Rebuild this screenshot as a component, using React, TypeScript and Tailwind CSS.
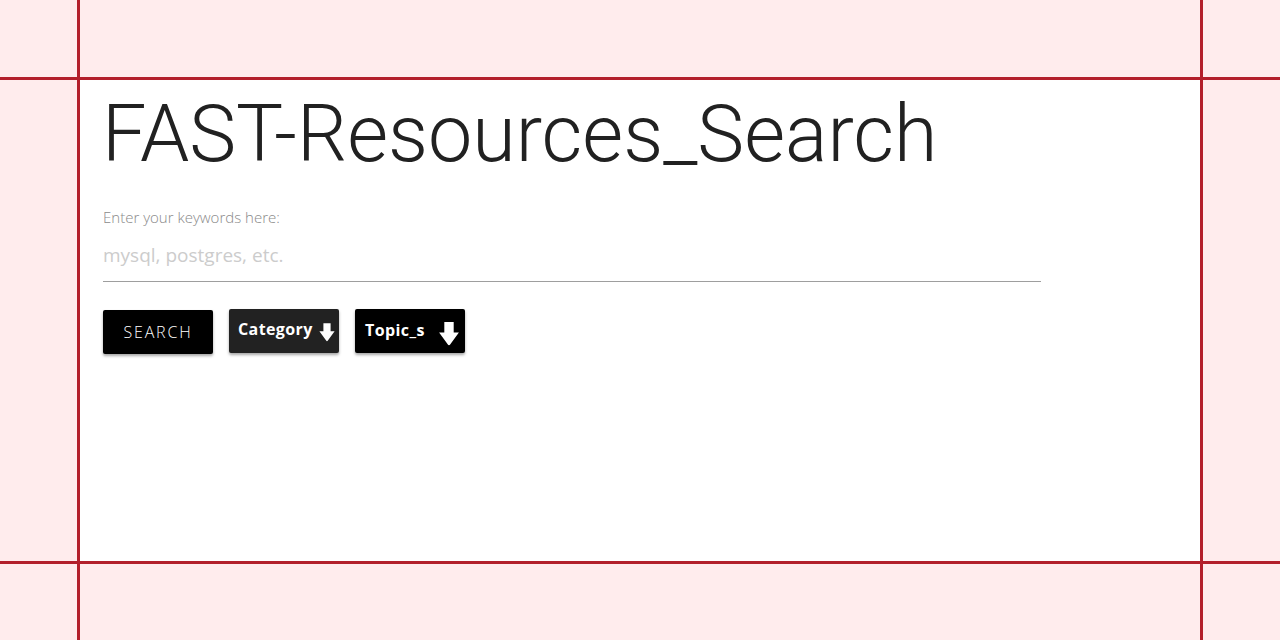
import React from 'react'

function ArrowDown({ className }: { className?: string }) {
  return (
    <svg viewBox="0 0 20 24" className={className} fill="currentColor">
      <path d="M5.5 1h9v10h5l-8.4 11.6a1.3 1.3 0 0 1-2.2 0L0.5 11h5z" />
    </svg>
  )
}

export default function App() {
  return (
    <div className="grid h-[640px] w-[1280px] grid-cols-[77px_3px_1120px_3px_77px] grid-rows-[77px_3px_481px_3px_76px] bg-[#b31f2b]">
      <div className="bg-[#ffeced]" />
      <div />
      <div className="bg-[#ffeced]" />
      <div />
      <div className="bg-[#ffeced]" />

      <div className="col-span-5" />

      <div className="bg-[#ffeced]" />
      <div />
      <main className="bg-white px-[22px] pt-[4px]" style={{ fontFamily: '"Open Sans", sans-serif' }}>
        <h1 className="text-[79px] leading-[100px] font-light text-[#212121]" style={{ fontFamily: 'Roboto, sans-serif' }}>
          FAST-Resources_Search
        </h1>
        <label className="mt-[24px] block pl-[1px] text-[15px] font-light leading-[19px] text-[#8a8a8a]">
          Enter your keywords here:
        </label>
        <input
          className="mt-[12px] ml-[1px] block h-[43px] w-[938px] border-b border-[#9e9e9e] pb-[10px] text-[19px] outline-none placeholder:text-[#cccccc]"
          placeholder="mysql, postgres, etc."
        />
        <div className="mt-[27px] ml-[1px] flex items-start gap-[16px]">
          <button className="mt-[1px] h-[44px] w-[110px] rounded-[2px] bg-black text-[16px] font-light tracking-[1.8px] text-white shadow-[0_2px_3px_rgba(0,0,0,0.35)]">
            SEARCH
          </button>
          <button className="flex h-[44px] w-[110px] items-start gap-[6px] rounded-[2px] bg-[#222222] pl-[9px] pt-[9px] text-[16px] font-bold tracking-[0.4px] text-white shadow-[0_2px_3px_rgba(0,0,0,0.35)]">
            <span className="leading-[22px]">Category</span>
            <ArrowDown className="mt-[4px] h-[20px] w-[16px]" />
          </button>
          <button className="flex h-[44px] w-[110px] items-start gap-[13px] rounded-[2px] bg-black pl-[10px] pt-[10px] text-[16px] font-bold tracking-[0.4px] text-white shadow-[0_2px_3px_rgba(0,0,0,0.35)]">
            <span className="leading-[22px]">Topic_s</span>
            <ArrowDown className="mt-[2px] h-[25px] w-[22px]" />
          </button>
        </div>
      </main>
      <div />
      <div className="bg-[#ffeced]" />

      <div className="col-span-5" />

      <div className="bg-[#ffeced]" />
      <div />
      <div className="bg-[#ffeced]" />
      <div />
      <div className="bg-[#ffeced]" />
    </div>
  )
}
